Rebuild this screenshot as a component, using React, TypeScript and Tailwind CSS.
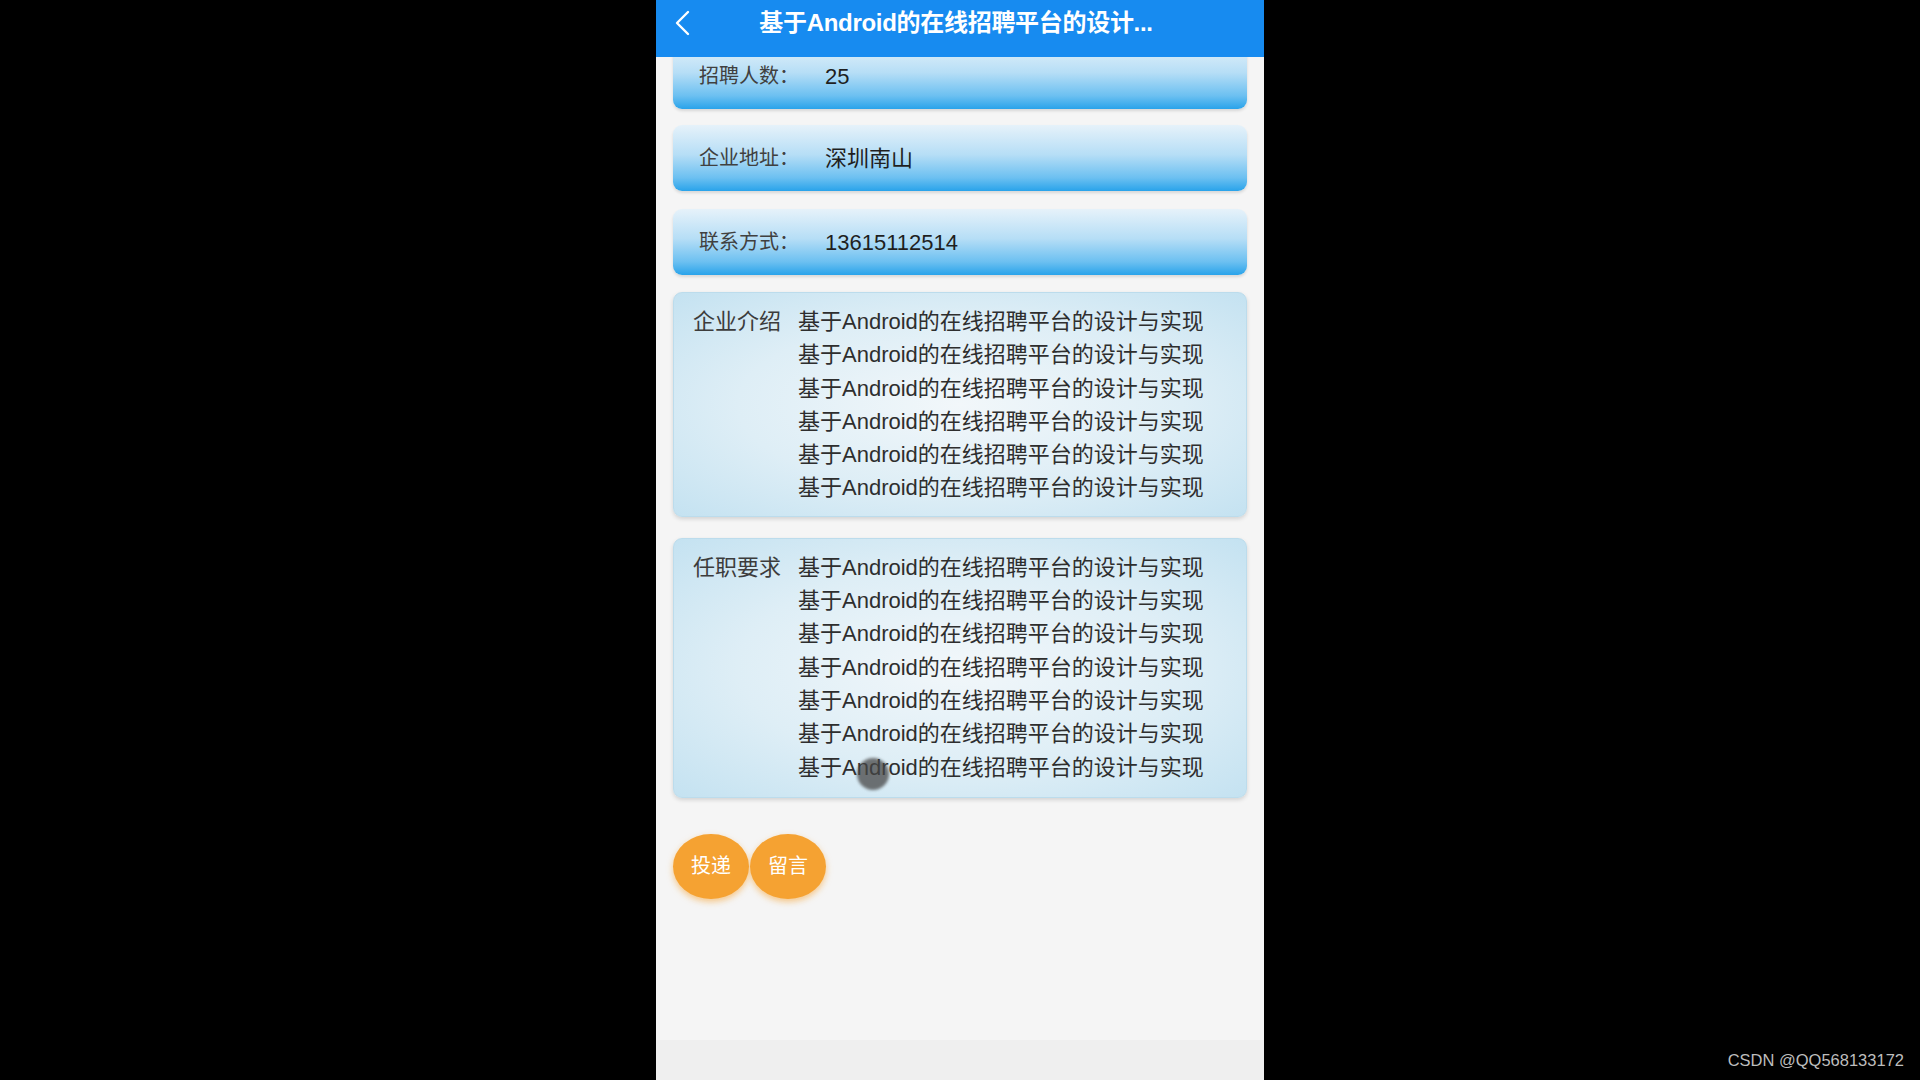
import React from "react";

const FONT = { fontFamily: '"Liberation Sans", Arial, "Noto Sans CJK SC", sans-serif' };

const LINE = "基于Android的在线招聘平台的设计与实现";

function InfoCard({ label, value, className = "" }: { label: string; value: string; className?: string }) {
  return (
    <div
      className={
        "h-[66px] rounded-[9px] flex items-center pl-[26px] shadow-[0_2px_3px_rgba(0,0,0,0.12)] bg-[linear-gradient(to_bottom,#e6f2fa_0%,#b6def6_45%,#6cc0f1_80%,#29a3ea_100%)] " +
        className
      }
    >
      <span className="w-[126px] text-[20px] text-[#404040]">{label}</span>
      <span className="text-[22px] text-[#1f1f1f]">{value}</span>
    </div>
  );
}

function TextCard({ label, lines, className = "" }: { label: string; lines: number; className?: string }) {
  return (
    <div
      className={
        "rounded-[9px] border border-[#bcdcec] flex pl-[19px] shadow-[0_2px_4px_rgba(0,0,0,0.14)] bg-[radial-gradient(ellipse_at_center,#f2f7fa_0%,#deeef6_55%,#c4e2f1_100%)] " +
        className
      }
    >
      <div className="w-[105px] text-[22px] leading-[33px] text-[#3c3c3c]">{label}</div>
      <div className="flex flex-col">
        {Array.from({ length: lines }).map((_, i) => (
          <div key={i} className="text-[22px] leading-[33.3px] text-[#2e2e2e] whitespace-nowrap">
            {LINE}
          </div>
        ))}
      </div>
    </div>
  );
}

export default function App() {
  return (
    <div className="relative w-full h-[1080px] bg-black flex justify-center overflow-hidden" style={FONT}>
      <div className="relative w-[608px] h-[1080px] bg-[#f5f5f5] flex flex-col overflow-hidden">
        <header className="relative h-[57px] shrink-0 bg-[#178bf0] flex items-start justify-center pt-[8px] z-10">
          <svg
            className="absolute left-[17px] top-[10px]"
            width="18"
            height="26"
            viewBox="0 0 18 26"
            fill="none"
            stroke="white"
            strokeWidth="2.4"
            strokeLinecap="round"
            strokeLinejoin="round"
          >
            <path d="M15 2 L4 13 L15 24" />
          </svg>
          <span className="text-white font-bold text-[24px] leading-[30px] tracking-[-0.3px] -ml-[8px]">
            基于Android的在线招聘平台的设计...
          </span>
        </header>

        <main className="flex-1 overflow-hidden px-[17px] flex flex-col">
          <InfoCard label="招聘人数：" value="25" className="-mt-[14px] shrink-0" />
          <InfoCard label="企业地址：" value="深圳南山" className="mt-[16px] shrink-0" />
          <InfoCard label="联系方式：" value="13615112514" className="mt-[18px] shrink-0" />
          <TextCard label="企业介绍" lines={6} className="mt-[17px] pt-[12px] pb-[11px] shrink-0" />
          <TextCard label="任职要求" lines={7} className="mt-[21px] pt-[12px] pb-[13px] shrink-0" />

          <div className="mt-[36px] flex gap-[1px]">
            <button className="w-[76px] h-[65px] rounded-[50%] bg-[#f5a232] text-white text-[20px] shadow-[0_3px_6px_rgba(245,162,50,0.55)]">
              投递
            </button>
            <button className="w-[76px] h-[65px] rounded-[50%] bg-[#f5a232] text-white text-[20px] shadow-[0_3px_6px_rgba(245,162,50,0.55)]">
              留言
            </button>
          </div>
        </main>

        <div className="h-[40px] shrink-0 bg-[#efefef]" />

        <div className="absolute left-[201px] top-[758px] w-[32px] h-[32px] rounded-full bg-[rgba(70,70,70,0.75)] blur-[1.5px]" />
      </div>

      <div className="absolute right-[16px] bottom-[7px] text-[16.5px] text-[#bdbdbd]">CSDN @QQ568133172</div>
    </div>
  );
}
